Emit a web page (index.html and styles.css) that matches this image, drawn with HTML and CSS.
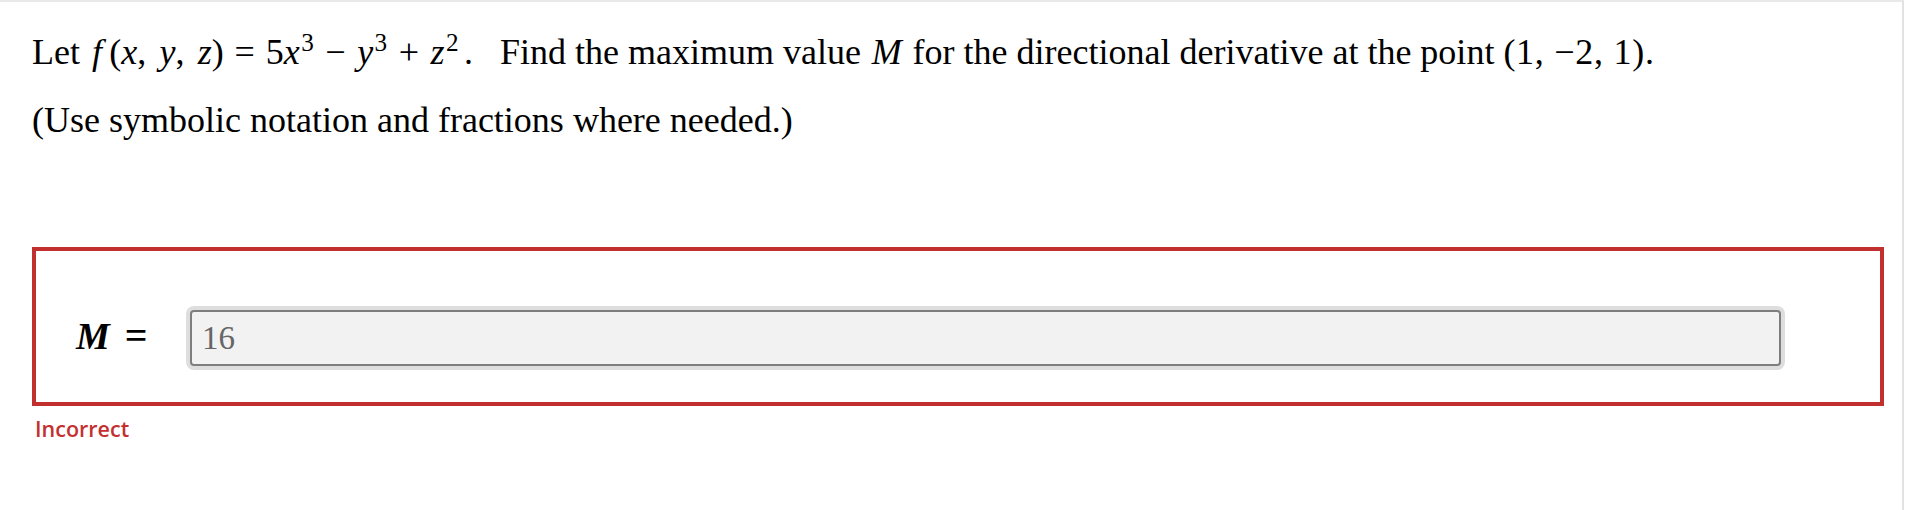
FILE: index.html
```html
<!DOCTYPE html>
<html>

<head>
  <title>Directional Derivative</title>
  <link rel="stylesheet" href="styles.css">
</head>

<body>
  <div class="page">
    <p class="question">Let <span class="math"><i class="fn">f</i>(<i>x</i><span class="sep">,</span> <i>y</i><span class="sep">,</span> <i>z</i>)<span class="rel">=</span>5<i>x</i><sup>3</sup><span class="op">&minus;</span><i>y</i><sup>3</sup><span class="op">+</span><i>z</i><sup>2</sup></span><span class="math-end">.</span> Find the maximum value <i class="var">M</i> for the directional derivative at the point <span class="point">(1, &minus;2, 1)</span>.</p>
    <p class="hint">(Use symbolic notation and fractions where needed.)</p>

    <div class="answer-box">
      <label class="answer-label" for="answer"><i>M</i><span class="eq">=</span></label>
      <input id="answer" class="answer-input" type="text" value="16" readonly>
    </div>

    <p class="feedback">Incorrect</p>
  </div>
</body>

</html>
```

FILE: styles.css
```css
body{
    margin: 0;
    background-color: white;
    color: black;
    font-family: "Liberation Serif", "Times New Roman", serif;
}
.page{
    width: 1904px;
    height: 510px;
    box-sizing: border-box;
    border-top: 2px solid #e9e9e9;
    border-right: 2px solid #e2e2e2;
    padding: 30px 18px 0 32px;
}
.question{
    font-size: 36px;
    line-height: 40px;
    margin: 0;
    white-space: nowrap;
}
.math{
    margin-left: 3px;
}
.math i{
    font-style: italic;
}
.math .fn{
    margin-right: 0.2em;
}
.math .sep{
    margin-right: 0.12em;
}
.math sup{
    font-size: 0.7em;
    line-height: 0;
    vertical-align: 0.5em;
    margin-left: 0.06em;
}
.rel{
    margin: 0 0.3em;
}
.op{
    margin: 0 0.32em;
}
.math-end{
    margin-left: 0.15em;
    margin-right: 0.5em;
}
.var{
    margin: 0 0.05em;
}
.point{
    letter-spacing: 0.02em;
}
.hint{
    font-size: 36px;
    line-height: 40px;
    margin: 28px 0 0 0;
}

.answer-box{
    margin-top: 107px;
    border: 4px solid #c1302f;
    padding: 59px 99px 36px 40px;
    display: flex;
    align-items: baseline;
}
.answer-label{
    flex: none;
    width: 114px;
    font-size: 38px;
    line-height: 40px;
    font-weight: bold;
}
.eq{
    font-size: 40px;
    margin-left: 15px;
}
.answer-input{
    flex: 1;
    min-width: 0;
    height: 56px;
    box-sizing: border-box;
    margin: 0;
    padding: 0 10px;
    border: 2px solid #7e7e7e;
    border-radius: 4px;
    background-color: #f2f2f2;
    box-shadow: 0 0 0 4px #dedede;
    font-family: "Liberation Serif", "Times New Roman", serif;
    font-size: 33px;
    color: #666666;
    outline: none;
}

.feedback{
    margin: 8px 0 0 3px;
    font-family: "Open Sans", "Noto Sans", sans-serif;
    font-size: 21.5px;
    font-weight: 600;
    line-height: 30px;
    color: #c4302f;
}
```
